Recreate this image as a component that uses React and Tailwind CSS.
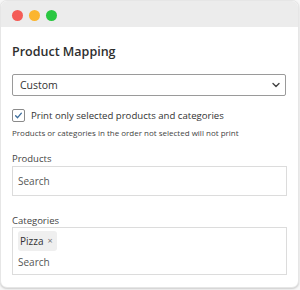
export default function App() {
  return (
    <div className="w-[300px] h-[290px] bg-[#f7f7f7] font-['Segoe_UI','Open_Sans',sans-serif] text-[#333]">
      <div className="w-[299px] h-[288px] bg-white rounded-[7px] shadow-[0_1px_2px_rgba(0,0,0,0.18)] border border-[#e6e6e6] overflow-hidden flex flex-col">
        {/* title bar */}
        <div className="h-[26px] bg-[#ececec] flex items-center gap-[6px] pl-[11px] pt-[2px] shrink-0">
          <span className="w-[11px] h-[11px] rounded-full bg-[#f45c57]" />
          <span className="w-[11px] h-[11px] rounded-full bg-[#fbb52e]" />
          <span className="w-[11px] h-[11px] rounded-full bg-[#2ac741]" />
        </div>

        <div className="px-[11px] pt-[16px]">
          <h1 className="text-[12.5px] font-semibold leading-[18px] text-[#2e2e2e]">Product Mapping</h1>

          <div className="mt-[13px] h-[22px] w-[274px] border border-[#9a9a9a] rounded-[2px] flex items-center justify-between pl-[7px] pr-[4px]">
            <span className="text-[10.5px] leading-[14px] text-[#333]">Custom</span>
            <svg width="10" height="10" viewBox="0 0 10 10" fill="none" stroke="#444" strokeWidth="1.4" strokeLinecap="round" strokeLinejoin="round">
              <path d="M2 3.5 L5 6.5 L8 3.5" />
            </svg>
          </div>

          <div className="mt-[13px] h-[13px] flex items-center gap-[6px]">
            <span className="w-[13px] h-[13px] border border-[#8a8a8a] rounded-[2px] flex items-center justify-center bg-white">
              <svg width="9" height="9" viewBox="0 0 10 10" fill="none" stroke="#3f6e9c" strokeWidth="1.5" strokeLinecap="round" strokeLinejoin="round">
                <path d="M1.8 5.2 L4 7.4 L8.2 2.4" />
              </svg>
            </span>
            <span className="text-[9.6px] leading-[13px] text-[#333]">Print only selected products and categories</span>
          </div>
          <p className="mt-[5px] text-[8px] leading-[12px] text-[#444]">Products or categories in the order not selected will not print</p>

          <div className="mt-[13px] text-[9.5px] leading-[14px] text-[#444]">Products</div>
          <div className="h-[30px] w-[275px] border border-[#dcdcdc] flex items-center pl-[5px]">
            <span className="text-[10px] text-[#555]">Search</span>
          </div>

          <div className="mt-[18px] text-[9.5px] leading-[13px] text-[#444]">Categories</div>
          <div className="h-[48px] w-[275px] border border-[#dcdcdc] flex flex-col items-start pl-[5px] pt-[3px]">
            <span className="h-[20px] bg-[#efefef] rounded-[3px] flex items-center pl-[2px] pr-[4px] gap-[4px]">
              <span className="text-[10px] text-[#333]">Pizza</span>
              <span className="text-[9px] text-[#777]">×</span>
            </span>
            <span className="mt-[4px] text-[10px] leading-[14px] text-[#555]">Search</span>
          </div>
        </div>
      </div>
    </div>
  );
}
